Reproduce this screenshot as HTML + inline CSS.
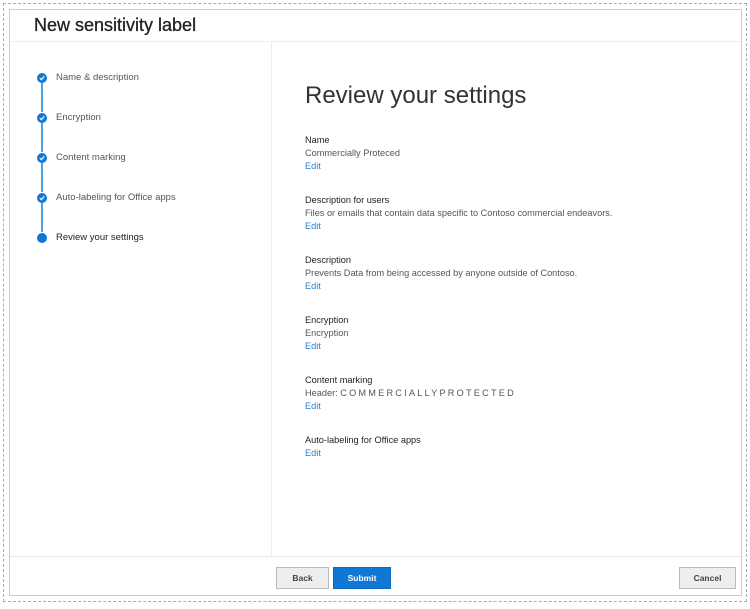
<!DOCTYPE html>
<html><head><style>
*{margin:0;padding:0;box-sizing:border-box}
body{width:750px;height:609px;background:#fff;font-family:"Liberation Sans",sans-serif;position:relative;overflow:hidden}
.dash{position:absolute;left:3px;top:3px;width:744px;height:599px;border:1px dashed #aaa}
.panel{position:absolute;left:9px;top:9px;width:733px;height:587px;border:1px solid #ccc;background:#fff}
.hdr{position:absolute;left:10px;top:10px;width:731px;height:32px;border-bottom:1px solid #eee}
.hdr span{position:absolute;left:24px;top:5px;font-size:18px;color:#222;-webkit-text-stroke:0.3px #222}
.vline{position:absolute;left:271px;top:42px;width:1px;height:514px;background:#eee}
.fline{position:absolute;left:10px;top:556px;width:731px;height:1px;background:#e6e6e6}
.t{position:absolute;font-size:9.5px;color:#555;white-space:nowrap}
.dot{position:absolute;left:37px;width:10px;height:10px;border-radius:50%;background:#0f78d4}
.dot svg{position:absolute;left:2px;top:2px}
.bar{position:absolute;left:41px;width:2px;background:#4aa2e8}
.h{position:absolute;left:305px;font-size:9.2px;color:#222;white-space:nowrap}
.v{position:absolute;left:305px;font-size:9.2px;color:#555;white-space:nowrap}
.e{position:absolute;left:305px;font-size:9.2px;color:#2a7dc9}
.btn{position:absolute;top:567px;height:22px;border:1px solid #bbb;background:#eee;font-size:8.5px;font-weight:bold;color:#444;text-align:center;line-height:20px}
</style></head><body>
<div class="dash"></div>
<div class="panel"></div>
<div class="hdr"><span>New sensitivity label</span></div>
<div class="vline"></div>
<div class="fline"></div>

<div class="bar" style="top:82px;height:30px"></div>
<div class="bar" style="top:122px;height:30px"></div>
<div class="bar" style="top:162px;height:30px"></div>
<div class="bar" style="top:202px;height:30px"></div>
<div class="dot" style="top:73px"><svg width="6" height="6" viewBox="0 0 6 6"><path d="M0.8 3.2L2.4 4.6L5.2 1.4" stroke="#fff" stroke-width="1.2" fill="none"/></svg></div>
<div class="dot" style="top:113px"><svg width="6" height="6" viewBox="0 0 6 6"><path d="M0.8 3.2L2.4 4.6L5.2 1.4" stroke="#fff" stroke-width="1.2" fill="none"/></svg></div>
<div class="dot" style="top:153px"><svg width="6" height="6" viewBox="0 0 6 6"><path d="M0.8 3.2L2.4 4.6L5.2 1.4" stroke="#fff" stroke-width="1.2" fill="none"/></svg></div>
<div class="dot" style="top:193px"><svg width="6" height="6" viewBox="0 0 6 6"><path d="M0.8 3.2L2.4 4.6L5.2 1.4" stroke="#fff" stroke-width="1.2" fill="none"/></svg></div>
<div class="dot" style="top:233px"></div>
<div class="t" style="left:56px;top:72px">Name &amp; description</div>
<div class="t" style="left:56px;top:112px">Encryption</div>
<div class="t" style="left:56px;top:152px">Content marking</div>
<div class="t" style="left:56px;top:192px">Auto-labeling for Office apps</div>
<div class="t" style="left:56px;top:232px;color:#222">Review your settings</div>

<div style="position:absolute;left:305px;top:82px;font-size:24px;color:#333">Review your settings</div>

<div class="h" style="top:135px">Name</div>
<div class="v" style="top:148px">Commercially Proteced</div>
<div class="e" style="top:161px">Edit</div>

<div class="h" style="top:195px">Description for users</div>
<div class="v" style="top:208px">Files or emails that contain data specific to Contoso commercial endeavors.</div>
<div class="e" style="top:221px">Edit</div>

<div class="h" style="top:255px">Description</div>
<div class="v" style="top:268px">Prevents Data from being accessed by anyone outside of Contoso.</div>
<div class="e" style="top:281px">Edit</div>

<div class="h" style="top:315px">Encryption</div>
<div class="v" style="top:328px">Encryption</div>
<div class="e" style="top:341px">Edit</div>

<div class="h" style="top:375px">Content marking</div>
<div class="v" style="top:388px">Header: <span style="letter-spacing:2.2px">COMMERCIALLYPROTECTED</span></div>
<div class="e" style="top:401px">Edit</div>

<div class="h" style="top:435px">Auto-labeling for Office apps</div>
<div class="e" style="top:448px">Edit</div>

<div class="btn" style="left:276px;width:53px">Back</div>
<div class="btn" style="left:333px;width:58px;background:#0f78d4;border-color:#0f6cbd;color:#fff">Submit</div>
<div class="btn" style="left:679px;width:57px">Cancel</div>
</body></html>
